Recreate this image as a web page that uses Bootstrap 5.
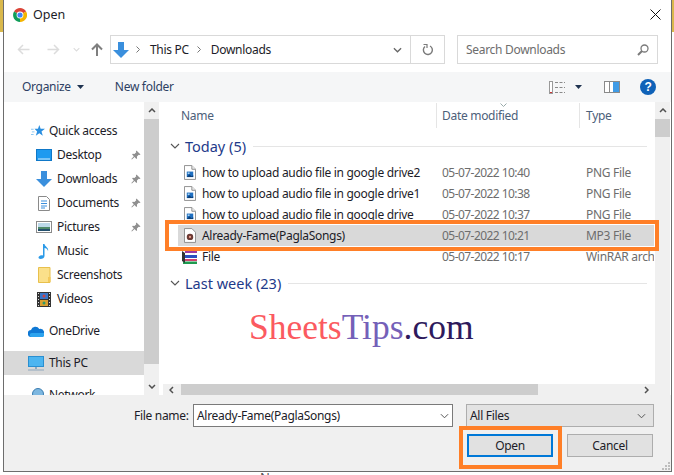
<!DOCTYPE html>
<html lang="en">
<head>
<meta charset="UTF-8">
<title>Open</title>
<link href="https://cdn.jsdelivr.net/npm/bootstrap@5.3.3/dist/css/bootstrap.min.css" rel="stylesheet">
<style>
  html, body { margin: 0; background: #fff; }
  body { font-family: "Noto Sans", "Open Sans", sans-serif; font-size: 12px; line-height: 16px; color: #1c1c28; letter-spacing: -.3px; }
  .desk { width: 674px; height: 475px; overflow: hidden; position: relative; }
  .side-l { width: 3px; height: 472px; background: linear-gradient(#d9b84c 0 32px, #fff 32px); flex: none; }
  .side-r { width: 2px; flex: none; background: linear-gradient(#d9b84c 0 32px, #fff 32px); }
  .dlg { width: 669px; height: 472px; flex: none; background: #fff; border: solid #6d6d6d; border-width: 0 1px 1px 1px; }
  .below { height: 3px; overflow: hidden; padding-left: 260px; color: #555; line-height: 10px; font-size: 13px; }
  .title-bar { height: 35px; padding: 0 0 6px 9px; font-size: 12.5px; letter-spacing: 0; }
  .title-bar .ttl { margin-left: 6px; }
  .x-btn { margin-left: auto; margin-right: 10px; }
  .addr-row { height: 37px; padding-left: 13px; align-items: flex-start !important; }
  .nav-arrows { height: 29px; }
  .nav-arrows .a2 { margin-left: 17px; }
  .nav-arrows .a3 { margin-left: 13px; }
  .nav-arrows .a4 { margin-left: 11px; }
  .addr-box { width: 335px; height: 29px; margin-left: 7px; border: 1px solid #d9d9d9; }
  .addr-box .drop-ic { margin-left: 2px; }
  .addr-box .sep1 { margin-left: 7px; }
  .addr-box .crumb { margin: 0 8px 0 10px; }
  .addr-end { width: 34px; height: 27px; border-left: 1px solid #d9d9d9; }
  .search-box { width: 201px; height: 29px; margin-left: 12px; border: 1px solid #d9d9d9; padding: 0 8px; color: #6d6d6d; }
  .tool-row { height: 30px; background: #f5f6f7; padding-left: 18px; color: #2d3f63; }
  .tool-row .org-caret { margin-left: 6px; }
  .tool-row .new-f { margin-left: 31px; }
  .tool-right { margin-left: auto; margin-right: 15px; }
  .tool-right .view-caret { margin: 0 22px 0 10px; }
  .tool-right .pane-ic { margin-right: 20px; }
  .main-area { height: 293px; }
  .nav-pane { width: 140px; flex: none; overflow: hidden; padding-top: 17px; }
  .nv { height: 24px; }
  .nv-top { padding-left: 24px; }
  .nv-top svg { margin-right: 5px; }
  .nv-top .star-ic { margin-left: 3px; margin-right: 4px; }
  .nv-sub { padding-left: 31px; }
  .nv-sub .ic { width: 18px; margin-right: 4px; display: flex; justify-content: center; }
  .nv-sub .pin { margin-left: auto; margin-right: 3px; }
  .nv-gap { margin-top: 8px; }
  .nv-sel { background: #d9d9d9; }
  .sb-v { width: 15px; flex: none; background: #f0f0f0; }
  .sb-v .arw { height: 17px; }
  .sb-v .thumb { background: #cdcdcd; }
  .sb-v .thumb-long { height: 245px; }
  .sb-v .thumb-short { height: 18px; }
  .gap-col { width: 4px; flex: none; }
  .content-pane { width: 492px; flex: none; }
  .head-row { height: 25px; margin-top: 1px; color: #4c607a; flex: none; position: relative; }
  .hc-name { width: 273px; padding-left: 18px; }
  .hc-date { width: 143px; padding-left: 5px; border-left: 1px solid #e5e5e5; }
  .hc-type { width: 76px; padding-left: 6px; border-left: 1px solid #e5e5e5; }
  .sort-ind { position: absolute; left: 337px; top: 0; }
  .list-area { flex-grow: 1; overflow: hidden; }
  .grp { height: 20px; padding-left: 7px; color: #1e3a8a; font-size: 14.5px; letter-spacing: 0; }
  .grp .rule { flex-grow: 1; height: 1px; background: #e5e5e5; margin: 0 8px 0 7px; }
  .grp .lbl { margin-left: 5px; }
  .grp-a { margin-top: 8px; margin-bottom: 6px; }
  .grp-b { margin-top: 6px; }
  .fl { height: 21px; margin-left: 15px; width: 476px; overflow: hidden; white-space: nowrap; }
  .fl .fi { width: 24px; padding-left: 6px; flex: none; display: flex; }
  .fl .fi .rar-ic { margin-left: -2px; }
  .fl .fn { width: 240px; flex: none; }
  .fl .fd { width: 144px; flex: none; color: #6d6d6d; letter-spacing: -.55px; }
  .fl .ft { color: #6d6d6d; }
  .fl-sel { background: #d9d9d9; }
  .sb-h { height: 11px; flex: none; background: #f0f0f0; }
  .sb-h .end-l { width: 18px; padding-left: 6px; }
  .sb-h .hthumb { width: 357px; height: 100%; background: #cdcdcd; }
  .sb-h .end-r { margin-left: auto; padding-right: 6px; }
  .foot { height: 76px; background: #f0f0f0; position: relative; }
  .foot-line { padding-top: 9px; height: 39px; }
  .lbl-name { margin-left: 130px; width: 59px; height: 23px; color: #1c1c28; }
  .inp-name { width: 260px; height: 23px; background: #fff; border: 1px solid #7a7a7a; padding: 0 3px; }
  .inp-name svg { margin-left: auto; }
  .sel-type { width: 188px; height: 23px; margin-left: 13px; background: #e3e3e3; border: 1px solid #adadad; padding: 0 3px; }
  .sel-type svg { margin-left: auto; }
  .foot-btns { padding-left: 463px; }
  .win-btn { width: 86px; height: 23px; background: #e1e1e1; border: 1px solid #adadad; color: #1c1c28; }
  .win-btn-on { border: 2px solid #0078d7; }
  .win-btn + .win-btn { margin-left: 14px; }
  .grip { position: absolute; right: 1px; bottom: 1px; }
  .mark-box { position: absolute; border: 4px solid #ff7f27; pointer-events: none; }
  .mark-row { left: 165px; top: 220px; width: 494px; height: 31px; }
  .mark-btn { left: 459px; top: 426px; width: 103px; height: 43px; }
  .water { position: absolute; left: 249px; top: 305px; font-family: "Liberation Serif", serif; font-size: 35.5px; line-height: 44px; letter-spacing: 0; white-space: nowrap; }
  .w1 { color: #fb5a60; }
  .w2 { color: #7460b8; }
  .w3 { color: #2e1a5c; }
  .defs-holder { position: absolute; }
</style>
</head>
<body>
<svg width="0" height="0" class="defs-holder">
  <symbol id="doc" viewBox="0 0 13 16">
    <path d="M.5.5h8l4 4v11H.5z" fill="#fff" stroke="#8a8a8a"/>
    <path d="M8.5.5v4h4" fill="#eee" stroke="#8a8a8a"/>
    <rect x="3" y="7" width="7" height="6" fill="#1f6fc0"/>
    <path d="M3 13l3-3 2 2 2-1v2z" fill="#0c3f78"/>
    <rect x="4" y="8" width="2" height="1.5" fill="#bfe0f7"/>
  </symbol>
  <symbol id="pin" viewBox="0 0 11 11">
    <path d="M6 .5l4.500 4.500-1.200.6-.8-.4-2 2 .2 1.800-.8.8-2-2L1 10.500l-.6-.6L3.100 7 1.200 5l.8-.8 1.800.2 2-2-.4-.8z" fill="#8f8f8f"/>
  </symbol>
  <symbol id="chev" viewBox="0 0 10 6">
    <path d="M1 1l4 4 4-4" fill="none" stroke="#555" stroke-width="1.100"/>
  </symbol>
</svg>

<div class="desk">
  <div class="d-flex">
    <div class="side-l"></div>
    <div class="dlg d-flex flex-column">

      <div class="title-bar d-flex align-items-center">
        <svg width="14" height="14" viewBox="0 0 14 14">
          <path d="M7 7L1 3.500A7 7 0 0 1 13.100 3.500z" fill="#db4437"/>
          <path d="M7 7L13.100 3.500A7 7 0 0 1 7 14z" fill="#f4b400"/>
          <path d="M7 7L7 14A7 7 0 0 1 1 3.500z" fill="#0f9d58"/>
          <circle cx="7" cy="7" r="3.400" fill="#fff"/>
          <circle cx="7" cy="7" r="2.600" fill="#4285f4"/>
        </svg>
        <span class="ttl">Open</span>
        <svg class="x-btn" width="11" height="11" viewBox="0 0 11 11"><path d="M.5.5l10 10M10.500.5l-10 10" stroke="#111" stroke-width="1"/></svg>
      </div>

      <div class="addr-row d-flex">
        <div class="nav-arrows d-flex align-items-center">
          <svg width="13" height="11" viewBox="0 0 13 11"><path d="M12.500 5.500H1.500M6 1L1.500 5.500 6 10" fill="none" stroke="#dcdcdc" stroke-width="1.500"/></svg>
          <svg class="a2" width="13" height="11" viewBox="0 0 13 11"><path d="M.5 5.500h11M7 1l4.500 4.500L7 10" fill="none" stroke="#dcdcdc" stroke-width="1.500"/></svg>
          <svg class="a3" width="7" height="5" viewBox="0 0 10 6"><path d="M1 1l4 4 4-4" fill="none" stroke="#dcdcdc" stroke-width="1.500"/></svg>
          <svg class="a4" width="12" height="13" viewBox="0 0 12 13"><path d="M6 13V1.500M1 6.500l5-5 5 5" fill="none" stroke="#7f7f7f" stroke-width="2"/></svg>
        </div>
        <div class="addr-box d-flex align-items-center">
          <svg class="drop-ic" width="16" height="16" viewBox="0 0 16 16"><path d="M5 0h6v8h5l-8 8-8-8h5z" fill="#3a8fdd"/></svg>
          <svg class="sep1" width="4" height="7" viewBox="0 0 4 7"><path d="M.5.5l3 3-3 3" fill="none" stroke="#777"/></svg>
          <span class="crumb">This PC</span>
          <svg width="4" height="7" viewBox="0 0 4 7"><path d="M.5.5l3 3-3 3" fill="none" stroke="#777"/></svg>
          <span class="crumb">Downloads</span>
          <svg class="ms-auto me-2" width="9" height="6" viewBox="0 0 10 6"><path d="M1 1l4 4 4-4" fill="none" stroke="#666" stroke-width="1.400"/></svg>
          <div class="addr-end d-flex align-items-center justify-content-center">
            <svg width="12" height="12" viewBox="0 0 12 12"><path d="M3 2.500A4.500 4.500 0 1 0 8 2" fill="none" stroke="#7a7a7a" stroke-width="1.400"/><path d="M1.500.5h3.500v3.500" fill="none" stroke="#7a7a7a" stroke-width="1.200"/></svg>
          </div>
        </div>
        <div class="search-box d-flex align-items-center justify-content-between">
          <span>Search Downloads</span>
          <svg width="12" height="12" viewBox="0 0 12 12"><circle cx="7.500" cy="4.500" r="3.500" fill="none" stroke="#7a7a7a" stroke-width="1.300"/><path d="M5 7L1 11" stroke="#7a7a7a" stroke-width="2"/></svg>
        </div>
      </div>

      <div class="tool-row d-flex align-items-center">
        <span>Organize</span>
        <svg class="org-caret" width="7" height="4" viewBox="0 0 7 4"><path d="M0 0h7L3.500 4z" fill="#1f3350"/></svg>
        <span class="new-f">New folder</span>
        <div class="tool-right d-flex align-items-center">
          <svg width="16" height="13" viewBox="0 0 16 13"><path d="M6 1.500h10M6 6.500h10M6 11.500h10" stroke="#8a8a8a" stroke-dasharray="3 1.500"/><rect x=".5" y=".5" width="3" height="12" fill="#fff" stroke="#999"/><path d="M1 11h2v1H1z" fill="#c33"/></svg>
          <svg class="view-caret" width="7" height="4" viewBox="0 0 7 4"><path d="M0 0h7L3.500 4z" fill="#1f3350"/></svg>
          <svg class="pane-ic" width="16" height="12" viewBox="0 0 16 12"><rect x=".5" y=".5" width="15" height="11" fill="#fff" stroke="#8a8a8a"/><rect x="9" y="1" width="6" height="10" fill="#3f9be6"/><path d="M5.500 1v10" stroke="#8a8a8a"/></svg>
          <svg width="16" height="16" viewBox="0 0 16 16"><circle cx="8" cy="8" r="8" fill="#0f62b8"/><text x="8" y="12" text-anchor="middle" font-family="Liberation Sans" font-size="12" font-weight="700" fill="#fff">?</text></svg>
        </div>
      </div>

      <div class="main-area d-flex">
        <div class="nav-pane">
          <div class="nv nv-top d-flex align-items-center">
            <svg class="star-ic" width="14" height="14" viewBox="0 0 16 14"><path d="M9.500 0l1.500 4.500h5l-4 3 1.500 5-4-3-4 3 1.500-5-3-3h4z" fill="#2b8fe0"/><path d="M0 5h3M1 8h3M0 11h3" stroke="#7ec0f0"/></svg>
            Quick access
          </div>
          <div class="nv nv-sub d-flex align-items-center">
            <span class="ic"><svg width="16" height="12" viewBox="0 0 16 12"><rect x=".5" y=".5" width="15" height="11" fill="#1e9af0" stroke="#0f78c8"/><path d="M2 10h12" stroke="#d6efff"/></svg></span>Desktop
            <svg class="pin" width="10" height="10"><use href="#pin"/></svg>
          </div>
          <div class="nv nv-sub d-flex align-items-center">
            <span class="ic"><svg width="16" height="16" viewBox="0 0 16 16"><path d="M5 0h6v8h5l-8 8-8-8h5z" fill="#3a8fdd"/></svg></span>Downloads
            <svg class="pin" width="10" height="10"><use href="#pin"/></svg>
          </div>
          <div class="nv nv-sub d-flex align-items-center">
            <span class="ic"><svg width="12" height="15" viewBox="0 0 12 15"><path d="M.5.500h8l3 3v11H.5z" fill="#fff" stroke="#8a8a8a"/><path d="M3 5h6M3 7.500h6M3 10h6M3 12h4" stroke="#3a8fdd"/></svg></span>Documents
            <svg class="pin" width="10" height="10"><use href="#pin"/></svg>
          </div>
          <div class="nv nv-sub d-flex align-items-center">
            <span class="ic"><svg width="16" height="12" viewBox="0 0 16 12"><rect x=".5" y=".5" width="15" height="11" fill="#fff" stroke="#8a8a8a"/><rect x="2" y="2" width="12" height="4" fill="#bcd9ea"/><rect x="2" y="6" width="12" height="2" fill="#4f8a6a"/><rect x="2" y="8" width="12" height="2" fill="#23506e"/></svg></span>Pictures
            <svg class="pin" width="10" height="10"><use href="#pin"/></svg>
          </div>
          <div class="nv nv-sub d-flex align-items-center">
            <span class="ic"><svg width="12" height="15" viewBox="0 0 12 15"><path d="M5 0h1.500c.5 3 4.500 3.500 3.500 7-.5-2-2-3-3.500-3v8c0 2-2 3-4 3S0 13.500 1 12.500 3.500 11 5 11.500z" fill="#2b9ae8"/></svg></span>Music
          </div>
          <div class="nv nv-sub d-flex align-items-center">
            <span class="ic"><svg width="13" height="16" viewBox="0 0 13 16"><path d="M.5.500h11.500v15H.5z" fill="#fbe08a" stroke="#e8c04c"/><rect x="10" y="10" width="2.500" height="5" fill="#f4c95a"/></svg></span>Screenshots
          </div>
          <div class="nv nv-sub d-flex align-items-center">
            <span class="ic"><svg width="14" height="15" viewBox="0 0 14 15"><rect width="14" height="15" fill="#333"/><path d="M1 1.500h1M1 4.500h1M1 7.500h1M1 10.500h1M1 13.500h1M12 1.500h1M12 4.500h1M12 7.500h1M12 10.500h1M12 13.500h1" stroke="#ddd"/><rect x="3" y="1" width="8" height="6" fill="#3a76c8"/><rect x="3" y="8" width="8" height="6" fill="#d9a030"/><circle cx="7" cy="4" r="1.500" fill="#c44"/><circle cx="7" cy="11" r="1.500" fill="#396"/></svg></span>Videos
          </div>
          <div class="nv nv-top nv-gap d-flex align-items-center">
            <svg width="16" height="11" viewBox="0 0 16 11"><path d="M3.500 11A3.500 3.500 0 0 1 3 4 4.500 4.500 0 0 1 11.300 3 3.500 3.500 0 0 1 13 11z" fill="#0f78d4"/><path d="M3.500 11A2 2 0 0 1 4 7h12v2a2 2 0 0 1-3 2z" fill="#2ca3ee"/></svg>
            OneDrive
          </div>
          <div class="nv nv-top nv-gap nv-sel d-flex align-items-center">
            <svg width="16" height="15" viewBox="0 0 16 15"><rect x=".5" y=".5" width="15" height="10" fill="#4db5f0" stroke="#2a8fd0"/><path d="M7 11h2v2H7z" fill="#8fa8bd"/><path d="M0 14h16" stroke="#8fa8bd"/></svg>
            This PC
          </div>
          <div class="nv nv-gap nv-top d-flex align-items-center">
            <svg width="16" height="15" viewBox="0 0 16 15"><circle cx="10" cy="6" r="5.500" fill="#7db7e0" stroke="#3a7cb0"/><rect x="0" y="8" width="11" height="6" fill="#3a9ae0"/></svg>
            Network
          </div>
        </div>
        <div class="sb-v d-flex flex-column">
          <div class="arw d-flex align-items-center justify-content-center"><svg width="8" height="5" viewBox="0 0 8 5"><path d="M1 4l3-3 3 3" fill="none" stroke="#505050" stroke-width="1.500"/></svg></div>
          <div class="thumb thumb-long"></div>
          <div class="arw mt-auto d-flex align-items-center justify-content-center"><svg width="8" height="5" viewBox="0 0 8 5"><path d="M1 1l3 3 3-3" fill="none" stroke="#505050" stroke-width="1.500"/></svg></div>
        </div>
        <div class="gap-col"></div>
        <div class="content-pane d-flex flex-column">
          <div class="head-row d-flex">
            <div class="hc-name d-flex align-items-center">Name</div>
            <div class="hc-date d-flex align-items-center">Date modified</div>
            <div class="hc-type d-flex align-items-center">Type</div>
            <svg class="sort-ind" width="7" height="4" viewBox="0 0 7 4"><path d="M.5.500l3 3 3-3" fill="none" stroke="#9aa"/></svg>
          </div>
          <div class="list-area">
            <div class="grp grp-a d-flex align-items-center">
              <svg width="10" height="6"><use href="#chev"/></svg><span class="lbl">Today (5)</span><span class="rule"></span>
            </div>
            <div class="fl d-flex align-items-center"><span class="fi"><svg width="12" height="15"><use href="#doc"/></svg></span><span class="fn">how to upload audio file in google drive2</span><span class="fd">05-07-2022 10:40</span><span class="ft">PNG File</span></div>
            <div class="fl d-flex align-items-center"><span class="fi"><svg width="12" height="15"><use href="#doc"/></svg></span><span class="fn">how to upload audio file in google drive1</span><span class="fd">05-07-2022 10:38</span><span class="ft">PNG File</span></div>
            <div class="fl d-flex align-items-center"><span class="fi"><svg width="12" height="15"><use href="#doc"/></svg></span><span class="fn">how to upload audio file in google drive</span><span class="fd">05-07-2022 10:37</span><span class="ft">PNG File</span></div>
            <div class="fl fl-sel d-flex align-items-center"><span class="fi"><svg width="12" height="15" viewBox="0 0 13 16"><path d="M.5.500h8l4 4v11H.5z" fill="#fff" stroke="#8a8a8a"/><circle cx="6.500" cy="9.500" r="3.500" fill="#6b3a34"/><circle cx="6.500" cy="9.500" r="1.200" fill="#f0a090"/></svg></span><span class="fn">Already-Fame(PaglaSongs)</span><span class="fd">05-07-2022 10:21</span><span class="ft">MP3 File</span></div>
            <div class="fl d-flex align-items-center"><span class="fi"><svg class="rar-ic" width="16" height="14" viewBox="0 0 16 14"><path d="M3 1l12-1v3H3z" fill="#a03aa0"/><path d="M2 5h13v3H2z" fill="#2b4fc0"/><path d="M2 9h13v2H2z" fill="#d04070"/><path d="M1 11.500h14V14H1z" fill="#1f9a50"/><path d="M0 1l3 2v10L0 11z" fill="#333"/></svg></span><span class="fn">File</span><span class="fd">05-07-2022 10:17</span><span class="ft">WinRAR archive</span></div>
            <div class="grp grp-b d-flex align-items-center">
              <svg width="10" height="6"><use href="#chev"/></svg><span class="lbl">Last week (23)</span><span class="rule"></span>
            </div>
          </div>
          <div class="sb-h d-flex align-items-center">
            <div class="end-l d-flex"><svg width="5" height="8" viewBox="0 0 5 8"><path d="M4 1L1 4l3 3" fill="none" stroke="#505050" stroke-width="1.500"/></svg></div>
            <div class="hthumb"></div>
            <div class="end-r d-flex"><svg width="5" height="8" viewBox="0 0 5 8"><path d="M1 1l3 3-3 3" fill="none" stroke="#505050" stroke-width="1.500"/></svg></div>
          </div>
        </div>
        <div class="sb-v d-flex flex-column">
          <div class="arw d-flex align-items-center justify-content-center"><svg width="8" height="5" viewBox="0 0 8 5"><path d="M1 4l3-3 3 3" fill="none" stroke="#505050" stroke-width="1.500"/></svg></div>
          <div class="thumb thumb-short"></div>
        </div>
      </div>

      <div class="foot">
        <div class="foot-line d-flex">
          <div class="lbl-name d-flex align-items-center">File name:</div>
          <div class="inp-name d-flex align-items-center">Already-Fame(PaglaSongs)<svg width="9" height="6"><use href="#chev"/></svg></div>
          <div class="sel-type d-flex align-items-center">All Files<svg class="me-1" width="9" height="6"><use href="#chev"/></svg></div>
        </div>
        <div class="foot-btns d-flex">
          <div class="win-btn win-btn-on d-flex align-items-center justify-content-center">Open</div>
          <div class="win-btn d-flex align-items-center justify-content-center">Cancel</div>
        </div>
        <svg class="grip" width="9" height="9" viewBox="0 0 9 9"><path d="M7 1h2v2H7zM4 4h2v2H4zM7 4h2v2H7zM1 7h2v2H1zM4 7h2v2H4zM7 7h2v2H7z" fill="#bdbdbd"/></svg>
      </div>
    </div>
    <div class="side-r"></div>
  </div>
  <div class="below">Name</div>

  <div class="mark-box mark-row"></div>
  <div class="mark-box mark-btn"></div>
  <div class="water"><span class="w1">Sheets</span><span class="w2">Tips</span><span class="w3">.com</span></div>
</div>
<script src="https://cdn.jsdelivr.net/npm/bootstrap@5.3.3/dist/js/bootstrap.bundle.min.js"></script>
</body>
</html>
